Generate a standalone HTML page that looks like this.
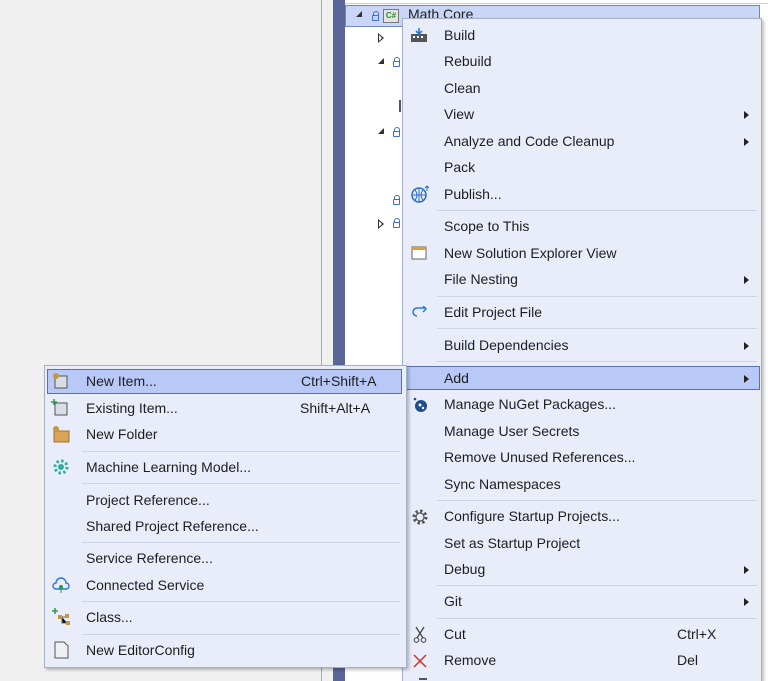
<!DOCTYPE html>
<html style="overflow:hidden;width:768px;height:681px"><head><meta charset="utf-8"><style>
*{margin:0;padding:0;box-sizing:border-box}
body{width:768px;height:681px;overflow:hidden;background:#f0f0f0;position:relative;font-family:"Liberation Sans",sans-serif;font-size:14px;color:#1e1e1e}
.abs{position:absolute}
.menu{position:absolute;background:#e9ecf9;border:1px solid #a8b0c8;box-shadow:2px 2px 3px rgba(0,0,0,.25)}
.it{position:absolute;left:0;right:0;height:25px;line-height:25px;white-space:nowrap}
.it .t{position:absolute}
.it .k{position:absolute}
.sep{position:absolute;height:1px;background:#cdd2e4}
.hl{background:#b8c9f8;border:1px solid #5b6fae}
.ar{position:absolute;width:0;height:0;border-top:4px solid transparent;border-bottom:4px solid transparent;border-left:5px solid #222;top:9px}
.tri{position:absolute;width:0;height:0;border-top:5px solid transparent;border-bottom:5px solid transparent;border-left:6px solid #333}
.tri i{position:absolute;left:-5px;top:-3px;border-top:3px solid transparent;border-bottom:3px solid transparent;border-left:3px solid #fff}
.dtri{position:absolute;width:0;height:0;border-left:6px solid transparent;border-bottom:6px solid #333}
.lock{position:absolute;width:7px;height:6px;border:1.5px solid #3b6fd0;border-radius:1px}
.lock:before{content:"";position:absolute;left:0;top:-5px;width:4px;height:4px;border:1.5px solid #3b6fd0;border-bottom:none;border-radius:3px 3px 0 0}
</style></head><body>
<div class="abs" style="left:321px;top:0;width:1px;height:681px;background:#a8a8a8"></div>
<div class="abs" style="left:333px;top:0;width:12px;height:681px;background:#5a6698"></div>
<div class="abs" style="left:345px;top:0;width:423px;height:681px;background:#fff"></div>
<div class="abs" style="left:345px;top:0;width:423px;height:4px;border-bottom:1px solid #c8cfe0"></div>
<div class="abs" style="left:345px;top:5px;width:415px;height:22px;background:#c9d6f7;border:1px solid #6f86c6"></div>
<div class="dtri" style="left:356px;top:11px"></div>
<div class="lock" style="left:372px;top:15px"></div>
<div class="abs" style="left:383px;top:9px;width:16px;height:14px;border:1px solid #777;background:#e4e4e4;font-size:8px;color:#2a8a2a;line-height:12px;text-align:center;font-weight:bold">C#</div>
<div class="abs" style="left:408px;top:6px;font-size:14px">Math Core</div>
<div class="tri" style="left:378px;top:33px"><i></i></div>
<div class="dtri" style="left:378px;top:58px"></div><div class="lock" style="left:393px;top:61px"></div>
<div class="abs" style="left:399px;top:100px;width:2px;height:12px;background:#555"></div>
<div class="dtri" style="left:378px;top:128px"></div><div class="lock" style="left:393px;top:131px"></div>
<div class="lock" style="left:393px;top:199px"></div>
<div class="tri" style="left:378px;top:219px"><i></i></div><div class="lock" style="left:393px;top:222px"></div>

<div class="menu" style="left:402px;top:18px;width:360px;height:663px;border-bottom:none">
<div class="it" style="top:4px"><svg class="abs" style="left:7px;top:4px" width="18" height="16"><rect x="1" y="7" width="16" height="8" fill="#555"/><path d="M9 1v6M6 4l3 3 3-3" stroke="#2b79d8" stroke-width="1.6" fill="none"/><g fill="#fff"><rect x="3" y="9" width="2" height="2"/><rect x="7" y="9" width="2" height="2"/><rect x="11" y="9" width="2" height="2"/></g></svg><span class="t" style="left:41px">Build</span></div>
<div class="it" style="top:30px"><span class="t" style="left:41px">Rebuild</span></div>
<div class="it" style="top:57px"><span class="t" style="left:41px">Clean</span></div>
<div class="it" style="top:83px"><span class="t" style="left:41px">View</span><i class="ar" style="left:341px"></i></div>
<div class="it" style="top:110px"><span class="t" style="left:41px">Analyze and Code Cleanup</span><i class="ar" style="left:341px"></i></div>
<div class="it" style="top:136px"><span class="t" style="left:41px">Pack</span></div>
<div class="it" style="top:163px"><svg class="abs" style="left:7px;top:3px" width="20" height="18"><circle cx="9" cy="10" r="7" fill="none" stroke="#2b6fc8" stroke-width="1.5"/><path d="M2 10h14M9 3v14M5 5q4 5 0 10M13 5q-4 5 0 10" stroke="#2b6fc8" stroke-width="1" fill="none"/><path d="M17 1v5M15 3l2-2 2 2" stroke="#2b6fc8" fill="none"/></svg><span class="t" style="left:41px">Publish...</span></div>
<div class="sep" style="left:34px;right:4px;top:191px"></div>
<div class="it" style="top:195px"><span class="t" style="left:41px">Scope to This</span></div>
<div class="it" style="top:222px"><svg class="abs" style="left:8px;top:4px" width="17" height="16"><rect x="1" y="2" width="14" height="12" fill="#fff" stroke="#666"/><rect x="1" y="2" width="14" height="3" fill="#d8a040"/></svg><span class="t" style="left:41px">New Solution Explorer View</span></div>
<div class="it" style="top:248px"><span class="t" style="left:41px">File Nesting</span><i class="ar" style="left:341px"></i></div>
<div class="sep" style="left:34px;right:4px;top:277px"></div>
<div class="it" style="top:281px"><svg class="abs" style="left:8px;top:6px" width="18" height="12"><path d="M15 6H6a4 4 0 0 0 0 8" transform="translate(0,-4)" stroke="#2b79d8" stroke-width="1.5" fill="none"/><path d="M12 -1l3 3-3 3" transform="translate(0,1)" stroke="#2b79d8" stroke-width="1.5" fill="none"/></svg><span class="t" style="left:41px">Edit Project File</span></div>
<div class="sep" style="left:34px;right:4px;top:309px"></div>
<div class="it" style="top:314px"><span class="t" style="left:41px">Build Dependencies</span><i class="ar" style="left:341px"></i></div>
<div class="sep" style="left:34px;right:4px;top:342px"></div>
<div class="it hl" style="top:347px;left:0;right:1px;height:24px;line-height:22px"><span class="t" style="left:40px">Add</span><i class="ar" style="left:340px;top:8px"></i></div>
<div class="it" style="top:373px"><svg class="abs" style="left:9px;top:4px" width="16" height="16"><circle cx="9" cy="10" r="6" fill="#1f4c92"/><circle cx="3" cy="3" r="1.3" fill="#1f4c92"/><circle cx="8" cy="9" r="1.5" fill="#fff"/><circle cx="11" cy="12" r="1.2" fill="#fff"/></svg><span class="t" style="left:41px">Manage NuGet Packages...</span></div>
<div class="it" style="top:400px"><span class="t" style="left:41px">Manage User Secrets</span></div>
<div class="it" style="top:426px"><span class="t" style="left:41px">Remove Unused References...</span></div>
<div class="it" style="top:453px"><span class="t" style="left:41px">Sync Namespaces</span></div>
<div class="sep" style="left:34px;right:4px;top:481px"></div>
<div class="it" style="top:485px"><svg class="abs" style="left:8px;top:4px" width="18" height="18"><circle cx="9" cy="9" r="6" fill="none" stroke="#555" stroke-width="3" stroke-dasharray="2.4 2.3"/><circle cx="9" cy="9" r="4" fill="none" stroke="#555" stroke-width="1.2"/></svg><span class="t" style="left:41px">Configure Startup Projects...</span></div>
<div class="it" style="top:512px"><span class="t" style="left:41px">Set as Startup Project</span></div>
<div class="it" style="top:538px"><span class="t" style="left:41px">Debug</span><i class="ar" style="left:341px"></i></div>
<div class="sep" style="left:34px;right:4px;top:566px"></div>
<div class="it" style="top:570px"><span class="t" style="left:41px">Git</span><i class="ar" style="left:341px"></i></div>
<div class="sep" style="left:34px;right:4px;top:599px"></div>
<div class="it" style="top:603px"><svg class="abs" style="left:10px;top:4px" width="14" height="18"><path d="M3 1l7 11M11 1L4 12" stroke="#444" stroke-width="1.3"/><circle cx="3.5" cy="14" r="2.3" fill="none" stroke="#444"/><circle cx="10.5" cy="14" r="2.3" fill="none" stroke="#444"/></svg><span class="t" style="left:41px">Cut</span><span class="k" style="left:274px">Ctrl+X</span></div>
<div class="it" style="top:629px"><svg class="abs" style="left:9px;top:5px" width="16" height="16"><path d="M2 2l12 12M14 2L2 14" stroke="#d03030" stroke-width="1.5"/></svg><span class="t" style="left:41px">Remove</span><span class="k" style="left:274px">Del</span></div>
<div class="abs" style="left:16px;top:659px;width:8px;height:2px;background:#555"></div>
</div>

<div class="menu" style="left:44px;top:365px;width:363px;height:303px">
<div class="it hl" style="top:3px;left:2px;right:4px;height:25px;line-height:23px"><svg class="abs" style="left:4px;top:2px" width="18" height="18"><rect x="3" y="4" width="12" height="12" fill="#d8dde8" stroke="#555"/><circle cx="4" cy="4" r="3" fill="#c89640"/></svg><span class="t" style="left:38px">New Item...</span><span class="k" style="left:253px">Ctrl+Shift+A</span></div>
<div class="it" style="top:30px"><svg class="abs" style="left:6px;top:3px" width="18" height="18"><rect x="4" y="4" width="12" height="12" fill="#d8dde8" stroke="#555"/><path d="M3 0v6M0 3h6" stroke="#2a9a4a" stroke-width="1.5"/></svg><span class="t" style="left:41px">Existing Item...</span><span class="k" style="left:255px">Shift+Alt+A</span></div>
<div class="it" style="top:56px"><svg class="abs" style="left:6px;top:3px" width="20" height="18"><rect x="3" y="6" width="15" height="11" fill="#d8a45a" stroke="#a07030"/><circle cx="5" cy="4" r="3" fill="#c89640"/></svg><span class="t" style="left:41px">New Folder</span></div>
<div class="sep" style="left:37px;right:6px;top:85px"></div>
<div class="it" style="top:89px"><svg class="abs" style="left:7px;top:3px" width="18" height="18"><circle cx="9" cy="9" r="6" fill="none" stroke="#2ab09a" stroke-width="3" stroke-dasharray="2.4 2.3"/><circle cx="9" cy="9" r="3" fill="#2ab09a"/></svg><span class="t" style="left:41px">Machine Learning Model...</span></div>
<div class="sep" style="left:37px;right:6px;top:117px"></div>
<div class="it" style="top:122px"><span class="t" style="left:41px">Project Reference...</span></div>
<div class="it" style="top:148px"><span class="t" style="left:41px">Shared Project Reference...</span></div>
<div class="sep" style="left:37px;right:6px;top:176px"></div>
<div class="it" style="top:180px"><span class="t" style="left:41px">Service Reference...</span></div>
<div class="it" style="top:207px"><svg class="abs" style="left:7px;top:4px" width="18" height="16"><path d="M4 12a3 3 0 0 1 0-6a5 5 0 0 1 10 0a3 3 0 0 1 0 6z" fill="none" stroke="#2b79d8" stroke-width="1.4"/><circle cx="9" cy="10" r="2" fill="#2a9a4a"/><path d="M9 12v4" stroke="#2a9a4a"/></svg><span class="t" style="left:41px">Connected Service</span></div>
<div class="sep" style="left:37px;right:6px;top:235px"></div>
<div class="it" style="top:239px"><svg class="abs" style="left:7px;top:3px" width="20" height="18"><path d="M3 0v6M0 3h6" stroke="#2a9a4a" stroke-width="1.5"/><path d="M7 9h6M10 9v6h5" stroke="#666"/><rect x="6" y="7" width="4" height="4" fill="#c89640"/><rect x="13" y="6" width="4" height="4" fill="#c89640"/><rect x="14" y="13" width="4" height="4" fill="#c89640"/></svg><span class="t" style="left:41px">Class...</span></div>
<div class="sep" style="left:37px;right:6px;top:268px"></div>
<div class="it" style="top:272px"><svg class="abs" style="left:9px;top:3px" width="16" height="18"><path d="M1 1h9l4 4v12H1z" fill="#eef0f4" stroke="#555"/></svg><span class="t" style="left:41px">New EditorConfig</span></div>
</div>
</body></html>
